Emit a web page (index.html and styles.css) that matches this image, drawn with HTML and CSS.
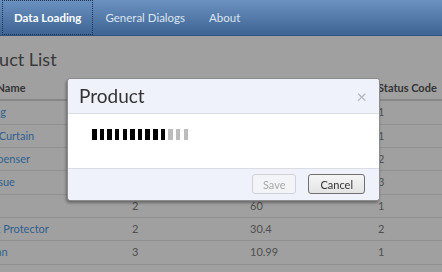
FILE: index.html
```html
<!DOCTYPE html>
<html lang="en">
<head>
    <meta charset="UTF-8">
    <meta name="viewport" content="width=device-width, initial-scale=1.0">
    <title>Product List</title>
    <link rel="stylesheet" href="styles.css">
</head>
<body>
    <nav class="navbar">
        <ul class="nav">
            <li><a href="#" class="active">Data Loading</a></li>
            <li><a href="#">General Dialogs</a></li>
            <li><a href="#">About</a></li>
        </ul>
    </nav>

    <div class="content">
        <h2>Product List</h2>
        <table class="table">
            <thead>
                <tr>
                    <th class="col-name">Product Name</th>
                    <th class="col-qty">Quantity</th>
                    <th class="col-price">Price</th>
                    <th>Status Code</th>
                </tr>
            </thead>
            <tbody>
                <tr><td><a href="#">Duffel Bag</a></td><td>1</td><td>24.5</td><td>1</td></tr>
                <tr><td><a href="#">Window Curtain</a></td><td>4</td><td>18</td><td>1</td></tr>
                <tr><td><a href="#">Soap Dispenser</a></td><td>2</td><td>7.5</td><td>2</td></tr>
                <tr><td><a href="#">Facial Tissue</a></td><td>5</td><td>3.99</td><td>3</td></tr>
                <tr><td><a href="#">Mop</a></td><td>2</td><td>60</td><td>1</td></tr>
                <tr><td><a href="#">Bedsheet Protector</a></td><td>2</td><td>30.4</td><td>2</td></tr>
                <tr><td><a href="#">Ceiling Fan</a></td><td>3</td><td>10.99</td><td>1</td></tr>
                <tr><td><a href="#">Table Lamp</a></td><td>2</td><td>49.99</td><td>1</td></tr>
            </tbody>
        </table>
    </div>

    <div class="modal-backdrop"></div>

    <div class="modal">
        <div class="modal-header">
            <h4>Product</h4>
            <button type="button" class="close">&times;</button>
        </div>
        <div class="modal-body">
            <div class="loader">
                <span></span><span></span><span></span><span></span><span></span>
                <span></span><span></span><span></span><span></span><span></span>
                <span class="off"></span><span class="off"></span><span class="off"></span>
            </div>
        </div>
        <div class="modal-footer">
            <button type="button" class="btn" disabled>Save</button>
            <button type="button" class="btn">Cancel</button>
        </div>
    </div>
</body>
</html>
```

FILE: styles.css
```css
* {
    box-sizing: border-box;
    margin: 0;
    padding: 0;
}

body {
    font-family: Lato, "Open Sans", sans-serif;
    background: white;
    color: #808080;
    overflow: hidden;
}

.navbar {
    position: relative;
    z-index: 20;
    height: 36px;
    background: linear-gradient(#6b91c1, #3e6494);
    border-bottom: 1px solid #2f5380;
}

.nav {
    list-style: none;
    display: flex;
    padding-left: 2px;
}

.nav a {
    display: block;
    height: 35px;
    line-height: 35px;
    padding: 0 12px;
    font-size: 11.5px;
    color: #dbe4ef;
    text-decoration: none;
}

.nav a.active {
    color: white;
    font-weight: bold;
    outline: 1px dotted #1f3350;
    outline-offset: -1px;
}

.content {
    margin-left: -50px;
}

.content h2 {
    font-size: 18px;
    font-weight: normal;
    line-height: 20px;
    color: #5c5c5c;
    margin: 13px 0 8px 12px;
}

.table {
    border-collapse: collapse;
    table-layout: fixed;
    width: 545px;
    font-size: 11px;
}

.table th,
.table td {
    text-align: left;
    padding: 3px 5px;
    line-height: 16.33px;
    white-space: nowrap;
    overflow: hidden;
}

.table th {
    color: #555;
    border-bottom: 2px solid #d8d8d8;
}

.table td {
    border-top: 1px solid #e6e6e6;
}

.table a {
    color: #4f9ae6;
    text-decoration: none;
}

.col-name { width: 177px; }
.col-qty { width: 118px; }
.col-price { width: 128px; }

.modal-backdrop {
    position: fixed;
    top: 0;
    left: 0;
    right: 0;
    bottom: 0;
    z-index: 10;
    background: rgba(0, 0, 0, 0.373);
}

.modal {
    position: fixed;
    top: 78px;
    left: 67px;
    z-index: 30;
    width: 313px;
    background: white;
    border: 1px solid rgba(0, 0, 0, 0.45);
    border-radius: 4px;
    box-shadow: -1px 2px 3px rgba(0, 0, 0, 0.35);
    overflow: hidden;
}

.modal-header {
    display: flex;
    justify-content: space-between;
    align-items: center;
    padding: 6px 12px 6px 11px;
    background: #eff2fb;
    border-bottom: 1px solid #dcdde2;
}

.modal-header h4 {
    font-size: 19px;
    font-weight: normal;
    line-height: 22px;
    color: #333;
}

.close {
    background: none;
    border: none;
    font-family: Lato, sans-serif;
    font-size: 18px;
    line-height: 22px;
    color: #b4b6bb;
    cursor: pointer;
}

.modal-body {
    height: 54px;
    padding: 15px 0 0 24px;
}

.loader {
    display: flex;
    gap: 3.125px;
}

.loader span {
    width: 4.5px;
    height: 11px;
    background: black;
}

.loader span.off {
    background: #bcbcbc;
}

.modal-footer {
    display: flex;
    justify-content: flex-end;
    gap: 12px;
    padding: 5px 14px 6px 0;
    background: #eff2fb;
    border-top: 1px solid #dcdde2;
}

.btn {
    height: 20px;
    padding: 0 11px;
    font-family: Lato, sans-serif;
    font-size: 11px;
    color: #333;
    background: linear-gradient(#f5f5f5, #e4e4e4);
    border: 1px solid #707070;
    border-radius: 3px;
    cursor: pointer;
}

.btn:disabled {
    color: #a8a8a8;
    background: #f3f4f8;
    border-color: #d0d2d8;
    padding: 0 10px;
    cursor: default;
}
```
